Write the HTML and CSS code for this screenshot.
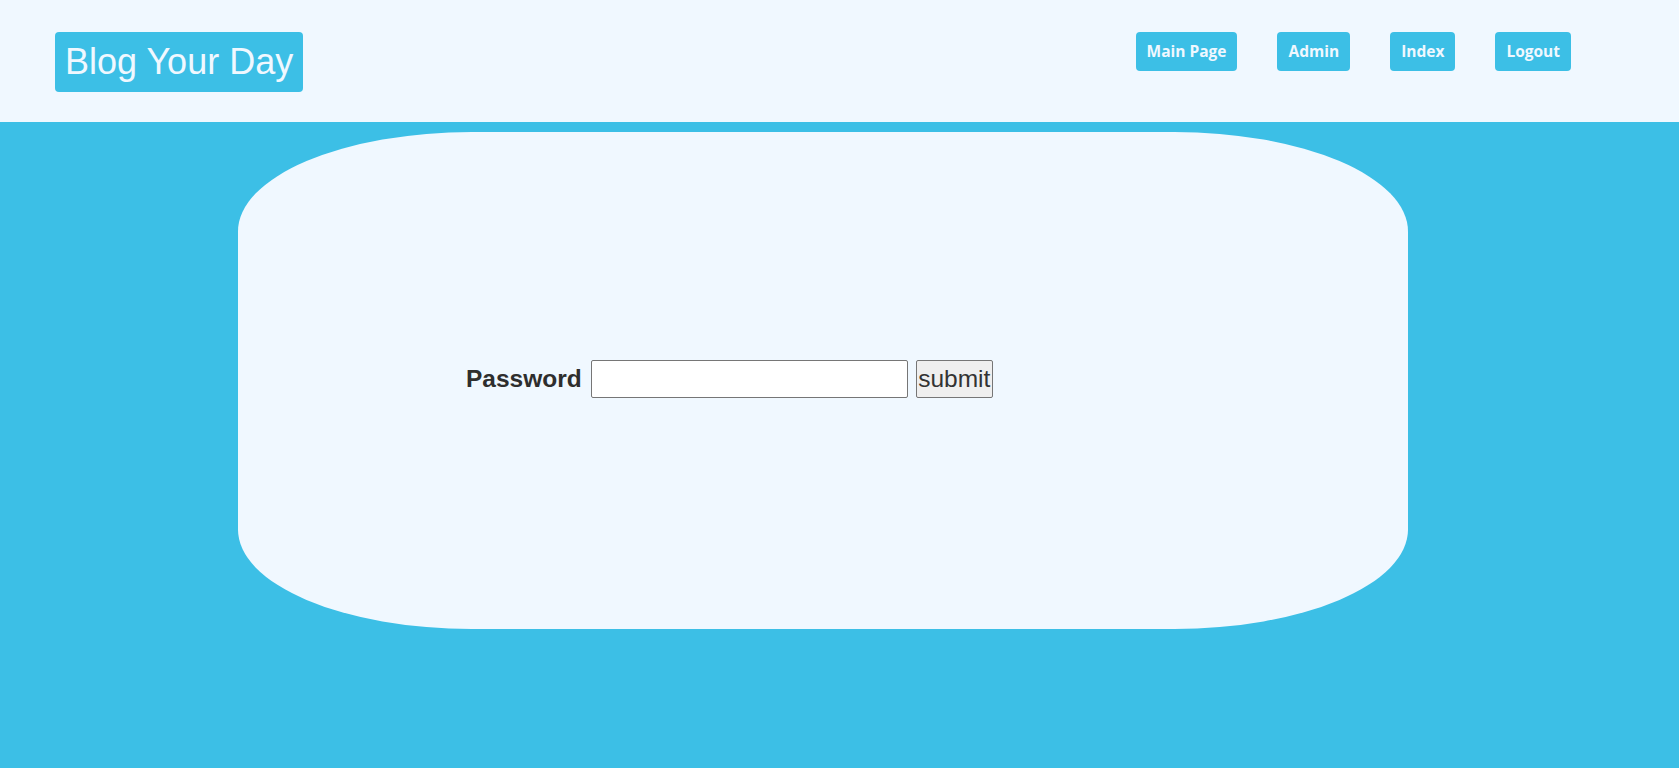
FILE: index.html
```html
<!DOCTYPE html>
<html lang="en">
<head>
<meta charset="utf-8">
<title>Blog Your Day</title>
<link rel="stylesheet" href="styles.css">
</head>
<body>
<header class="site-header">
  <a class="logo" href="#">Blog Your Day</a>
  <nav class="nav">
    <a class="nav-btn" href="#">Main Page</a>
    <a class="nav-btn" href="#">Admin</a>
    <a class="nav-btn" href="#">Index</a>
    <a class="nav-btn" href="#">Logout</a>
  </nav>
</header>
<main class="main">
  <section class="card">
    <form class="login-form">
      <label class="pw-label" for="pw">Password</label>
      <input class="pw-input" id="pw" type="password">
      <button class="submit-btn" type="button">submit</button>
    </form>
  </section>
</main>
</body>
</html>
```

FILE: styles.css
```css
html, body {
  margin: 0;
  padding: 0;
}
body {
  background: #3cbfe6;
  font-family: "Liberation Sans", Arial, sans-serif;
  min-height: 768px;
}
.site-header {
  background: #f0f8ff;
  height: 122px;
  box-sizing: border-box;
  padding: 32px 108px 0 55px;
  display: flex;
  justify-content: space-between;
  align-items: flex-start;
}
.logo {
  display: block;
  background: #3cbfe6;
  color: #f0f8ff;
  text-decoration: none;
  font-size: 36px;
  line-height: 40px;
  padding: 10px;
  border-radius: 4px;
}
.nav {
  display: flex;
  gap: 40px;
}
.nav-btn {
  display: block;
  background: #3cbfe6;
  color: #f0f8ff;
  text-decoration: none;
  font-family: "Open Sans", sans-serif;
  font-weight: 700;
  font-size: 15.5px;
  line-height: 19px;
  padding: 10px 11px;
  border-radius: 4px;
}
.main {
  padding-top: 10px;
}
.card {
  margin-left: 238px;
  width: 1170px;
  height: 497px;
  box-sizing: border-box;
  background: #f0f8ff;
  border-radius: 20%;
  display: flex;
  align-items: center;
  padding-left: 228px;
}
.login-form {
  display: flex;
  align-items: center;
  margin-top: -3px;
}
.pw-label {
  font-weight: 700;
  font-size: 24.5px;
  color: #2e2e2e;
  margin-right: 9px;
}
.pw-input {
  width: 317px;
  height: 38px;
  box-sizing: border-box;
  border: 1px solid #767676;
  border-radius: 2px;
  background: #fff;
  margin: 0 8px 0 0;
  padding: 1px 4px;
  font-size: 24px;
}
.submit-btn {
  height: 38px;
  width: 77px;
  box-sizing: border-box;
  border: 1px solid #767676;
  border-radius: 2px;
  background: #efefef;
  color: #333;
  font-family: "Liberation Sans", Arial, sans-serif;
  font-size: 24.5px;
  line-height: 28px;
  padding: 0;
  margin: 0;
}
```
